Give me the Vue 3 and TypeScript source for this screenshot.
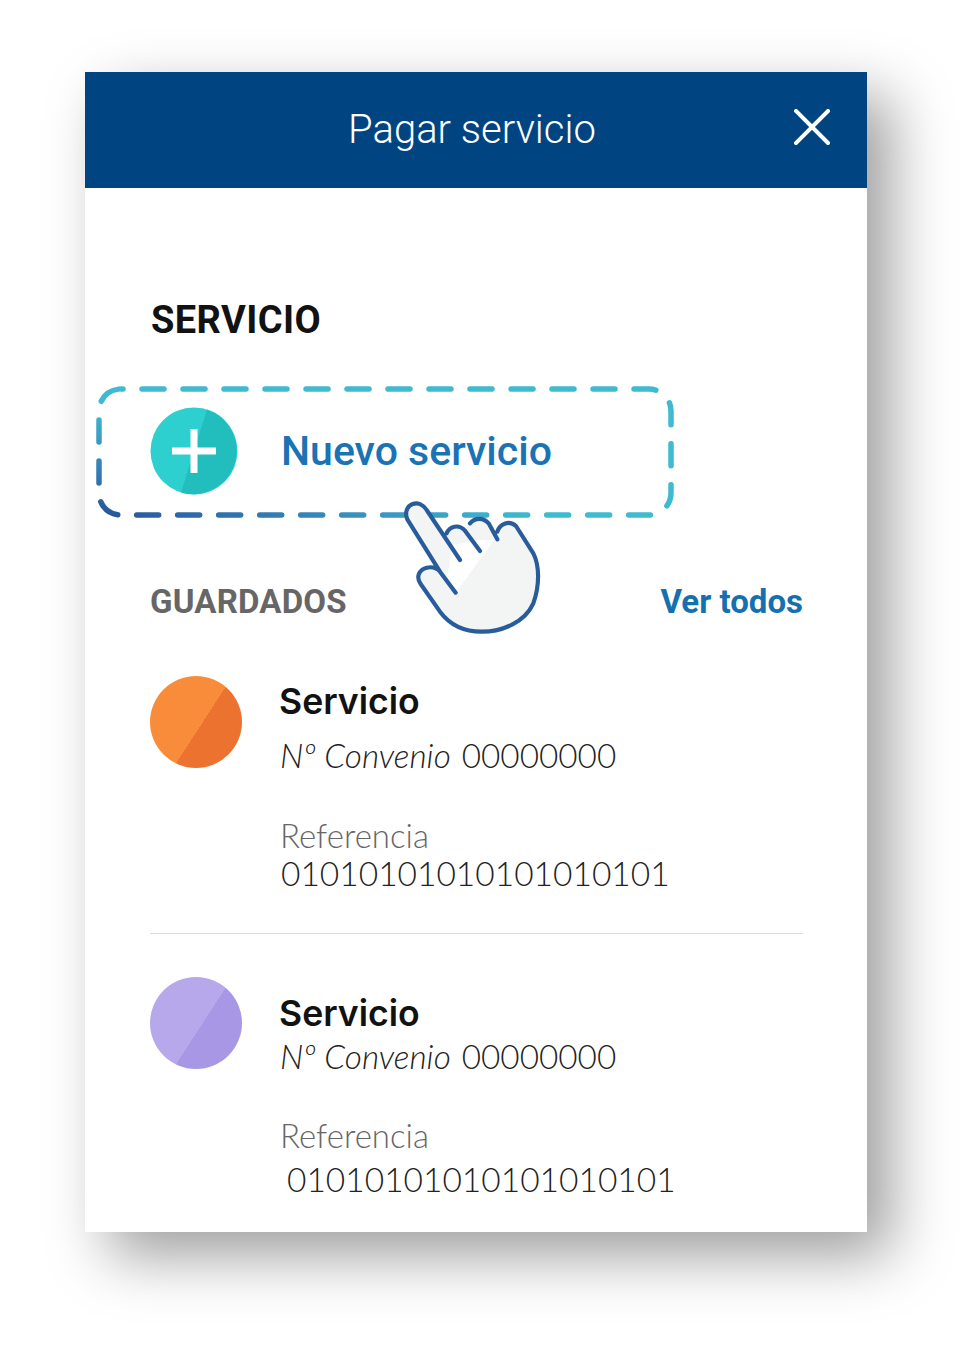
<script setup lang="ts">
interface Saved {
  id: number;
  name: string;
  agreement: string;
  reference: string;
  variant: 'orange' | 'purple';
}

const saved: Saved[] = [
  { id: 1, name: 'Servicio', agreement: '00000000', reference: '01010101010101010101', variant: 'orange' },
  { id: 2, name: 'Servicio', agreement: '00000000', reference: '01010101010101010101', variant: 'purple' },
]
</script>

<template>
  <div class="page">
    <div class="card">
      <header class="topbar">
        <h1 class="topbar-title">Pagar servicio</h1>
        <button class="close-btn" aria-label="Cerrar">
          <svg width="36" height="36" viewBox="0 0 36 36">
            <path d="M2 2 L34 34 M34 2 L2 34" stroke="#fff" stroke-width="4" stroke-linecap="square" fill="none" />
          </svg>
        </button>
      </header>

      <main class="content">
        <h2 class="section-title">SERVICIO</h2>

        <div class="new-service">
          <svg class="dashes" width="578" height="132" viewBox="0 0 578 132">
            <defs>
              <linearGradient id="dash" gradientUnits="userSpaceOnUse" x1="0" y1="132" x2="26" y2="27">
                <stop offset="0" stop-color="#27509a" />
                <stop offset="0.6" stop-color="#3a8fbd" />
                <stop offset="1" stop-color="#3fbad0" />
              </linearGradient>
            </defs>
            <rect x="3" y="3" width="572" height="126" rx="22" fill="none" stroke="url(#dash)" stroke-width="5.5"
              stroke-linecap="round" stroke-dasharray="22 19" stroke-dashoffset="-21" />
          </svg>
          <svg class="plus" width="88" height="88" viewBox="0 0 88 88">
            <circle cx="44" cy="44" r="43.5" fill="#2dcfcf" />
            <path d="M57 2.5 A43.5 43.5 0 0 1 31 85.5 Z" fill="#22bdbd" />
            <path d="M40.5 22 H47.5 V40.5 H66 V47.5 H47.5 V66 H40.5 V47.5 H22 V40.5 H40.5 Z" fill="#fff" />
          </svg>
          <span class="new-label">Nuevo servicio</span>
        </div>

        <div class="saved-head">
          <span class="saved-title">GUARDADOS</span>
          <a class="saved-link">Ver todos</a>
          <svg class="hand" width="170" height="160" viewBox="0 0 510 480">
            <path
              d="M52 88 C44 70 50 48 68 42 C84 37 100 44 110 60 L172 152 L170 130 C178 110 205 100 225 122 L240 100 C255 82 280 82 296 100 L322 140 C324 112 350 90 378 108 L430 190 C448 225 450 285 430 340 C405 395 340 425 275 425 C225 425 180 405 150 365 L92 282 C78 262 85 240 110 233 C128 229 142 236 150 245 Z"
              fill="#f3f5f5" />
            <path d="M188 165 L270 150 L312 150 L200 305 L172 262 Z" fill="#fff" />
            <path
              d="M150 245 L52 88 C44 70 50 48 68 42 C84 37 100 44 110 60 L210 210 M170 130 C178 110 205 100 225 122 L270 183 M240 100 C255 82 280 82 296 100 L322 148 M322 125 C330 100 358 90 378 108 L430 190 C448 225 450 285 430 340 C405 395 340 425 275 425 C225 425 180 405 150 365 L92 282 C78 262 85 240 110 233 C128 229 142 236 150 245 L197 308"
              fill="none" stroke="#285c9b" stroke-width="12.5" stroke-linecap="round" stroke-linejoin="round" />
          </svg>
        </div>

        <ul class="saved-list">
          <li v-for="item in saved" :key="item.id" class="saved-item" :class="item.variant">
            <span class="avatar" />
            <div class="saved-info">
              <div class="saved-name">{{ item.name }}</div>
              <div class="saved-agreement"><em class="agreement-label">Nº Convenio</em>{{ item.agreement }}</div>
              <div class="saved-ref-label">Referencia</div>
              <div class="saved-ref">{{ item.reference }}</div>
            </div>
          </li>
        </ul>
      </main>
    </div>
  </div>
</template>

<style>
body {
  background: #fff;
}
</style>

<style scoped>
.page {
  width: 980px;
  height: 1359px;
  padding: 72px 113px 0 85px;
  box-sizing: border-box;
  overflow: hidden;
  font-family: Lato, "Liberation Sans", sans-serif;
}

.card {
  height: 1160px;
  background: #fff;
  box-shadow: 24px 24px 56px rgba(0, 0, 0, 0.38);
  overflow: hidden;
}

.topbar {
  height: 116px;
  background: #004481;
  display: flex;
  align-items: center;
  justify-content: center;
  position: relative;
  padding: 0 8px 2px 0;
  box-sizing: border-box;
}

.topbar-title {
  margin: 0;
  color: #fff;
  font-family: Roboto, sans-serif;
  font-size: 40px;
  font-weight: 300;
}

.close-btn {
  position: absolute;
  right: 37px;
  top: 37px;
  padding: 0;
  border: none;
  background: none;
  line-height: 0;
}

.content {
  padding: 109px 64px 0 66px;
}

.section-title {
  margin: 0;
  font-family: Roboto, sans-serif;
  font-size: 38px;
  letter-spacing: 0.4px;
  line-height: 46px;
  font-weight: 700;
  color: #121212;
}

.new-service {
  position: relative;
  height: 132px;
  margin-top: 42px;
  margin-left: -1px;
  display: flex;
  align-items: center;
  gap: 43px;
}

.dashes {
  position: absolute;
  left: -54px;
  top: 1px;
}

.plus {
  flex: none;
}

.new-label {
  font-family: Roboto, sans-serif;
  font-size: 41px;
  font-weight: 500;
  color: #1a73b5;
}

.saved-head {
  position: relative;
  margin-top: 61px;
  margin-left: -1px;
  display: flex;
  justify-content: space-between;
  align-items: center;
  height: 46px;
}

.saved-title {
  font-family: Roboto, sans-serif;
  font-size: 33px;
  letter-spacing: 0.2px;
  font-weight: 700;
  color: #666;
}

.saved-link {
  font-family: Roboto, sans-serif;
  font-size: 33px;
  font-weight: 700;
  color: #1570b0;
}

.hand {
  position: absolute;
  left: 240px;
  top: -88px;
}

.saved-list {
  list-style: none;
  margin: 0 0 0 -1px;
  padding: 0;
}

.saved-item {
  display: flex;
  gap: 38px;
}

.saved-item.orange {
  padding-top: 52px;
  padding-bottom: 41px;
  border-bottom: 1px solid #ddd;
}

.saved-item.purple {
  padding-top: 43px;
}

.avatar {
  flex: none;
  width: 92px;
  height: 92px;
  border-radius: 50%;
}

.orange .avatar {
  background: linear-gradient(123deg, #f98c3b 54.5%, #ec732f 54.5%);
}

.purple .avatar {
  background: linear-gradient(123deg, #b7a8ec 54.5%, #a897e4 54.5%);
}

.saved-info {
  min-width: 0;
  margin-left: -1px;
}

.orange .saved-info {
  margin-top: 1px;
}

.purple .saved-info {
  padding-top: 12px;
}

.saved-name {
  font-family: Inter, sans-serif;
  font-size: 35.6px;
  line-height: 50px;
  font-weight: 600;
  color: #121212;
}

.saved-agreement {
  font-size: 33.3px;
  line-height: 40px;
  font-weight: 300;
  color: #222;
  margin-top: 8px;
  padding-left: 1px;
}

.agreement-label {
  margin-right: 11px;
}

.purple .saved-agreement {
  margin-top: -3px;
}

.saved-ref-label {
  font-size: 33px;
  line-height: 40px;
  font-weight: 300;
  color: #666;
  margin-top: 40px;
  padding-left: 1px;
}

.purple .saved-ref-label {
  margin-top: 39px;
}

.saved-ref {
  font-size: 33.5px;
  line-height: 37px;
  font-weight: 300;
  color: #222;
  padding-left: 2px;
}

.purple .saved-ref {
  margin-top: 6px;
  padding-left: 8px;
}
</style>
